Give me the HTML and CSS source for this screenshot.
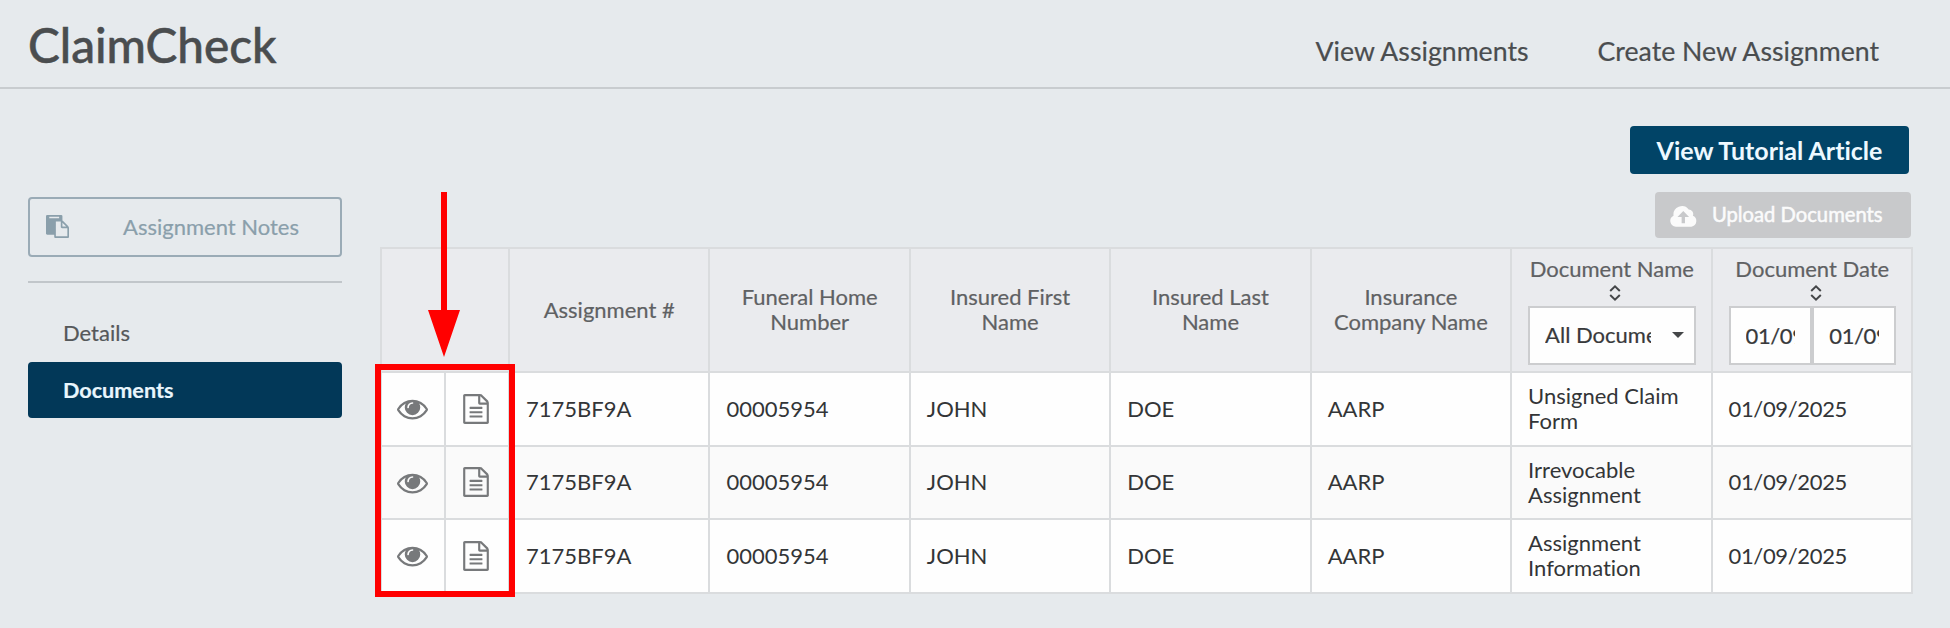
FILE: index.html
```
<!DOCTYPE html>
<html lang="en">
<head>
    <meta charset="UTF-8">
    <meta name="viewport" content="width=device-width, initial-scale=1.0">
    <title>ClaimCheck</title>
    <link rel="stylesheet" href="styles.css">
</head>
<body>
    <!-- Icons -->
    <svg class="icon-defs" width="0" height="0">
        <symbol id="icon-eye" viewBox="0 0 1792 1792">
            <path d="M1664 960q-152-236-381-353 61 104 61 225 0 185-131.5 316.5t-316.5 131.5-316.5-131.5-131.5-316.5q0-121 61-225-229 117-381 353 133 205 333.5 326.5t434.5 121.5 434.5-121.5 333.5-326.5zm-720-384q0-20-14-34t-34-14q-125 0-214.5 89.5t-89.5 214.5q0 20 14 34t34 14 34-14 14-34q0-86 61-147t147-61q20 0 34-14t14-34zm848 384q0 34-20 69-140 230-376.5 368.5t-499.5 138.5-499.5-139-376.5-368q-20-35-20-69t20-69q140-229 376.5-368t499.5-139 499.5 139 376.5 368q20 35 20 69z"/>
        </symbol>
        <symbol id="icon-file" viewBox="0 0 1792 1792">
            <path d="M1596 380q28 28 48 76t20 88v1152q0 40-28 68t-68 28h-1344q-40 0-68-28t-28-68v-1600q0-40 28-68t68-28h896q40 0 88 20t76 48zm-444-244v376h376q-10-29-22-41l-313-313q-12-12-41-22zm384 1528v-1024h-416q-40 0-68-28t-28-68v-416h-768v1536h1280zm-1024-864q0-14 9-23t23-9h704q14 0 23 9t9 23v64q0 14-9 23t-23 9h-704q-14 0-23-9t-9-23v-64zm736 224q14 0 23 9t9 23v64q0 14-9 23t-23 9h-704q-14 0-23-9t-9-23v-64q0-14 9-23t23-9h704zm0 256q14 0 23 9t9 23v64q0 14-9 23t-23 9h-704q-14 0-23-9t-9-23v-64q0-14 9-23t23-9h704z"/>
        </symbol>
        <symbol id="icon-paste" viewBox="0 0 1792 1792">
            <path d="M768 1664h896v-640h-416q-40 0-68-28t-28-68v-416h-384v1152zm256-1440v-64q0-13-9.5-22.5t-22.5-9.5h-704q-13 0-22.5 9.5t-9.5 22.5v64q0 13 9.5 22.5t22.5 9.5h704q13 0 22.5-9.5t9.5-22.5zm256 672h299l-299-299v299zm512 128v672q0 40-28 68t-68 28h-960q-40 0-68-28t-28-68v-160h-544q-40 0-68-28t-28-68v-1344q0-40 28-68t68-28h1088q40 0 68 28t28 68v328q21 13 36 28l408 408q28 28 48 76t20 88z"/>
        </symbol>
        <symbol id="icon-cloud" viewBox="0 0 26 20">
            <path fill-rule="evenodd" d="M5.6 19.8a5.6 5.6 0 0 1-2.2-10.6 8.2 8.2 0 0 1 14.6-6 4.4 4.4 0 0 1 4 6.1 5.5 5.5 0 0 1-1.4 10.5zM12.8 4.6l-5.6 6h4v5.8h3.2v-5.8h4z"/>
        </symbol>
        <symbol id="icon-sort" viewBox="0 0 12 16">
            <path d="M1.2 6L6 1.4 10.8 6M1.2 10L6 14.6 10.8 10" fill="none" stroke="currentColor" stroke-width="2"/>
        </symbol>
    </svg>

    <header class="header">
        <div class="logo">ClaimCheck</div>
        <nav class="nav">
            <a>View Assignments</a>
            <a>Create New Assignment</a>
        </nav>
    </header>

    <div class="page">
        <!-- Sidebar -->
        <aside class="sidebar">
            <button class="notes-button">
                <svg class="icon-paste"><use href="#icon-paste"/></svg>
                <span>Assignment Notes</span>
            </button>
            <hr class="divider">
            <ul class="menu">
                <li>Details</li>
                <li class="active">Documents</li>
            </ul>
        </aside>

        <!-- Documents -->
        <main class="content">
            <div class="actions">
                <button class="tutorial-button">View Tutorial Article</button>
                <button class="upload-button">
                    <svg class="icon-cloud"><use href="#icon-cloud"/></svg>
                    <span>Upload Documents</span>
                </button>
            </div>

            <div class="table-wrap">
                <table class="documents">
                    <colgroup>
                        <col class="col-icon">
                        <col class="col-icon">
                        <col span="7">
                    </colgroup>
                    <thead>
                        <tr>
                            <th colspan="2"></th>
                            <th>Assignment #</th>
                            <th>Funeral Home Number</th>
                            <th>Insured First Name</th>
                            <th>Insured Last Name</th>
                            <th>Insurance Company Name</th>
                            <th class="filter">
                                <div>Document Name</div>
                                <svg class="icon-sort"><use href="#icon-sort"/></svg>
                                <div class="select"><span>All Documents</span></div>
                            </th>
                            <th class="filter">
                                <div>Document Date</div>
                                <svg class="icon-sort"><use href="#icon-sort"/></svg>
                                <div class="dates">
                                    <div class="date"><span>01/09</span></div>
                                    <div class="date"><span>01/09</span></div>
                                </div>
                            </th>
                        </tr>
                    </thead>
                    <tbody>
                        <tr>
                            <td class="icon"><svg class="icon-eye"><use href="#icon-eye"/></svg></td>
                            <td class="icon"><svg class="icon-file"><use href="#icon-file"/></svg></td>
                            <td>7175BF9A</td>
                            <td>00005954</td>
                            <td>JOHN</td>
                            <td>DOE</td>
                            <td>AARP</td>
                            <td>Unsigned Claim Form</td>
                            <td class="day">01/09/2025</td>
                        </tr>
                        <tr>
                            <td class="icon"><svg class="icon-eye"><use href="#icon-eye"/></svg></td>
                            <td class="icon"><svg class="icon-file"><use href="#icon-file"/></svg></td>
                            <td>7175BF9A</td>
                            <td>00005954</td>
                            <td>JOHN</td>
                            <td>DOE</td>
                            <td>AARP</td>
                            <td>Irrevocable Assignment</td>
                            <td class="day">01/09/2025</td>
                        </tr>
                        <tr>
                            <td class="icon"><svg class="icon-eye"><use href="#icon-eye"/></svg></td>
                            <td class="icon"><svg class="icon-file"><use href="#icon-file"/></svg></td>
                            <td>7175BF9A</td>
                            <td>00005954</td>
                            <td>JOHN</td>
                            <td>DOE</td>
                            <td>AARP</td>
                            <td>Assignment Information</td>
                            <td class="day">01/09/2025</td>
                        </tr>
                    </tbody>
                </table>

                <!-- Callout over the icon columns -->
                <svg class="arrow" viewBox="0 0 32 165">
                    <path d="M13 0h6v118h13L16 165 0 118h13z"/>
                </svg>
                <div class="highlight-box"></div>
            </div>
        </main>
    </div>
</body>
</html>
```
FILE: styles.css
```
* {
    box-sizing: border-box;
}

body {
    margin: 0;
    background-color: #e6eaed;
    color: #333537;
    font-family: Lato, "Liberation Sans", sans-serif;
    font-size: 22px;
    font-variant-ligatures: none;
    height: 628px;
    overflow: hidden;
}

button {
    font-family: inherit;
    font-variant-ligatures: inherit;
    border: none;
    border-radius: 4px;
}

svg {
    fill: currentColor;
}

.icon-defs {
    position: absolute;
}

/* Header */
.header {
    display: flex;
    justify-content: space-between;
    height: 89px;
    padding: 0 71px 0 28px;
    border-bottom: 2px solid #c8cccf;
    color: #4a4d4f;
}

.logo {
    font-size: 47.7px;
    font-weight: 500;
    line-height: 89px;
    -webkit-text-stroke: 0.5px currentColor;
}

.nav {
    display: flex;
    gap: 69px;
    font-size: 26.7px;
    line-height: 102px;
    -webkit-text-stroke: 0.2px currentColor;
}

.page {
    display: flex;
}

/* Sidebar */
.sidebar {
    width: 342px;
    padding: 108px 0 0 28px;
}

.notes-button {
    display: flex;
    align-items: center;
    width: 100%;
    height: 60px;
    padding: 0 16px 2px;
    background: none;
    border: 2px solid #9aabb6;
    color: #8a9fab;
    font-size: 22px;
    -webkit-text-stroke: 0.2px currentColor;
}

.notes-button span {
    margin-left: 54px;
}

.icon-paste {
    width: 23px;
    height: 23px;
}

.divider {
    height: 2px;
    margin: 24px 0 0;
    border: none;
    background-color: #c1c6ca;
}

.menu {
    list-style: none;
    margin: 22px 0 0;
    padding: 0;
}

.menu li {
    height: 56px;
    padding-left: 35px;
    line-height: 56px;
    color: #55585a;
    -webkit-text-stroke: 0.2px currentColor;
}

.menu .active {
    margin-top: 1px;
    background-color: #023858;
    border-radius: 4px;
    color: #e9f6fd;
    font-size: 21.6px;
    font-weight: bold;
}

/* Buttons above the table */
.content {
    padding: 37px 0 0 38px;
}

.actions {
    display: flex;
    flex-direction: column;
    align-items: flex-end;
    gap: 18px;
    margin-right: 2px;
}

.tutorial-button {
    width: 279px;
    height: 48px;
    margin-right: 2px;
    background-color: #014467;
    color: #eef9ff;
    font-size: 25px;
    font-weight: bold;
}

.upload-button {
    display: flex;
    align-items: center;
    width: 256px;
    height: 46px;
    padding: 0 15px 2px;
    background-color: #c8c9cb;
    color: #fbfbfb;
    font-size: 20.2px;
    -webkit-text-stroke: 0.5px currentColor;
}

.upload-button span {
    margin-left: 15px;
}

.icon-cloud {
    width: 27px;
    height: 21px;
    margin-top: 5px;
}

/* Documents table */
.table-wrap {
    position: relative;
    margin-top: 9px;
}

.documents {
    width: 1533px;
    table-layout: fixed;
    border-collapse: collapse;
    line-height: 25px;
}

.col-icon {
    width: 64px;
}

.documents th,
.documents td {
    border: 2px solid #dadcde;
}

.documents th {
    height: 124px;
    padding: 0 16px 2px;
    background-color: #eaebee;
    color: #5f6163;
    font-weight: normal;
    -webkit-text-stroke: 0.2px currentColor;
}

.documents td {
    height: 73.6px;
    padding: 0 16px 1px;
    background-color: #fefefe;
}

.documents tr:nth-child(even) td {
    background-color: #fafafa;
}

.documents .icon {
    padding: 0 2px 0 0;
    color: #77797b;
}

.documents .icon svg {
    display: block;
    margin: 0 auto;
}

.documents .day {
    letter-spacing: -0.35px;
}

.icon-eye {
    width: 31px;
    height: 31px;
}

.icon-file {
    width: 30px;
    height: 30px;
}

.documents .filter {
    padding: 0 15px 0 16px;
}

.icon-sort {
    display: block;
    width: 12px;
    height: 16px;
    margin: 4px auto 5px 81px;
    color: #444648;
}

.select,
.date {
    height: 59px;
    padding: 0 15px;
    background-color: #fefefe;
    border: 2px solid #cccdcf;
    color: #38393b;
    line-height: 56px;
    text-align: left;
}

.select {
    display: flex;
    align-items: center;
    justify-content: space-between;
    padding-right: 10px;
}

.select span,
.date span {
    display: block;
    overflow: hidden;
    white-space: nowrap;
}

.select span {
    width: 106px;
}

.select::after {
    content: "";
    border: 6px solid transparent;
    border-top-color: #444648;
    border-bottom: none;
}

.dates {
    display: flex;
}

.date {
    flex: 1;
    min-width: 0;
    letter-spacing: -0.4px;
}

/* Callout */
.arrow {
    position: absolute;
    left: 48px;
    top: -55px;
    width: 32px;
    height: 165px;
    fill: #ff0000;
}

.highlight-box {
    position: absolute;
    left: -5px;
    top: 117px;
    width: 140px;
    height: 233px;
    border: 6px solid #ff0000;
}
```
